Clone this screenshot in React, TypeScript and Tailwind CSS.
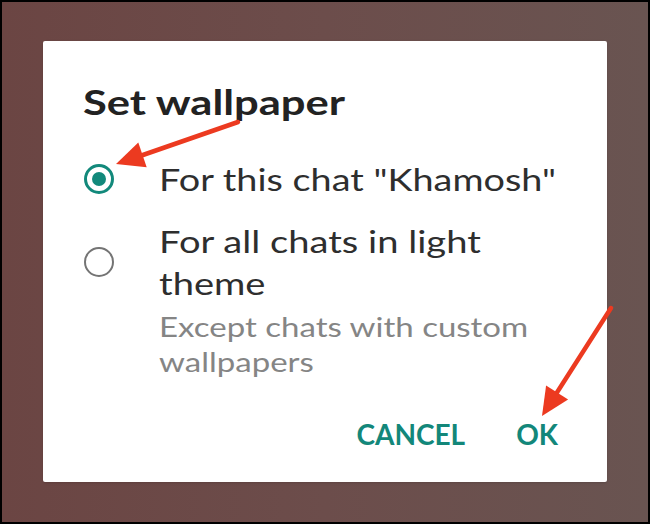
import React from "react";

const font = { fontFamily: "Lato, 'Open Sans', sans-serif" };

function Radio({ checked }: { checked: boolean }) {
  if (checked) {
    return (
      <div className="flex items-center justify-center w-[30px] h-[30px] rounded-full border-[3px] border-[#12897b] shrink-0">
        <div className="w-[14px] h-[14px] rounded-full bg-[#12897b]" />
      </div>
    );
  }
  return <div className="w-[30px] h-[30px] rounded-full border-[2.5px] border-[#747474] shrink-0" />;
}

function Arrows() {
  // red annotation arrows drawn over the screenshot
  return (
    <svg className="absolute inset-0 pointer-events-none" width="650" height="524" viewBox="0 0 650 524">
      <line x1="238" y1="122" x2="140" y2="156" stroke="#ec3a20" strokeWidth="4.5" strokeLinecap="round" />
      <polygon points="116,164 146.7,167.2 138.3,142.6" fill="#ec3a20" />
      <line x1="611" y1="308" x2="556" y2="394" stroke="#ec3a20" strokeWidth="4.5" strokeLinecap="round" />
      <polygon points="542,416 568.1,399.4 546.1,385.4" fill="#ec3a20" />
    </svg>
  );
}

export default function App() {
  return (
    <div className="relative w-[650px] h-[524px] bg-black p-[2px]" style={font}>
      <div className="w-full h-full bg-gradient-to-r from-[#6b4543] via-[#6c4d4b] to-[#695451] pt-[39px] pl-[41px]">
        <div className="w-[564px] h-[441px] bg-white rounded-[2px] shadow-sm flex flex-col pt-[41px]">
          <h1 className="pl-[40px] text-[34px] leading-[40px] font-bold text-[#222222]">
            <span className="inline-block origin-left scale-x-[1.28] whitespace-nowrap">Set wallpaper</span>
          </h1>

          <div className="flex items-center mt-[36px] pl-[41px]">
            <Radio checked />
            <span className="ml-[45px] inline-block origin-left scale-x-[1.26] whitespace-nowrap text-[30px] leading-[42px] text-[#2e2e2e]">
              For this chat "Khamosh"
            </span>
          </div>

          <div className="flex items-start mt-[20px] pl-[41px]">
            <div className="mt-[27px]">
              <Radio checked={false} />
            </div>
            <div className="ml-[45px] flex flex-col origin-left scale-x-[1.27] whitespace-nowrap">
              <span className="text-[30px] leading-[42px] text-[#2e2e2e]">
                For all chats in light
                <br />
                theme
              </span>
              <span className="mt-[6px] text-[26px] leading-[35px] text-[#858585]">
                Except chats with custom
                <br />
                wallpapers
              </span>
            </div>
          </div>

          <div className="flex justify-end items-center gap-[51px] mt-[39px] pr-[49px]">
            <span className="text-[28px] leading-[30px] font-bold text-[#13877a]">CANCEL</span>
            <span className="text-[28px] leading-[30px] font-bold text-[#13877a]">OK</span>
          </div>
        </div>
      </div>
      <Arrows />
    </div>
  );
}
